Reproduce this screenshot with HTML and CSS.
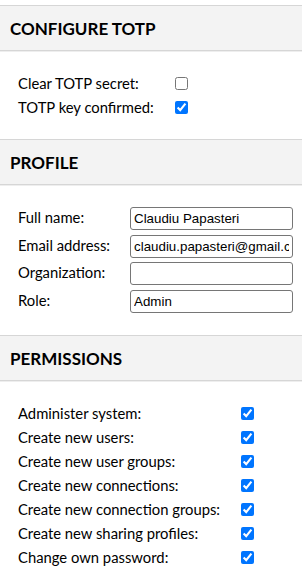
FILE: index.html
```html
<!DOCTYPE html>
<html lang="en">
<head>
    <meta charset="UTF-8">
    <meta name="viewport" content="width=device-width, initial-scale=1.0">
    <title>Edit User</title>
    <link rel="stylesheet" href="styles.css">
</head>
<body>
    <div class="section">
        <div class="section-header">
            <h2>Configure TOTP</h2>
        </div>
        <div class="section-content">
            <table class="fields checks">
                <tr>
                    <th>Clear TOTP secret:</th>
                    <td><input type="checkbox"></td>
                </tr>
                <tr>
                    <th>TOTP key confirmed:</th>
                    <td><input type="checkbox" checked></td>
                </tr>
            </table>
        </div>
    </div>

    <div class="section">
        <div class="section-header">
            <h2>Profile</h2>
        </div>
        <div class="section-content profile-content">
            <table class="fields profile">
                <tr>
                    <th>Full name:</th>
                    <td><input type="text" value="Claudiu Papasteri"></td>
                </tr>
                <tr>
                    <th>Email address:</th>
                    <td><input type="text" value="claudiu.papasteri@gmail.com"></td>
                </tr>
                <tr>
                    <th>Organization:</th>
                    <td><input type="text" value=""></td>
                </tr>
                <tr>
                    <th>Role:</th>
                    <td><input type="text" value="Admin"></td>
                </tr>
            </table>
        </div>
    </div>

    <div class="section">
        <div class="section-header">
            <h2>Permissions</h2>
        </div>
        <div class="section-content">
            <table class="fields checks">
                <tr>
                    <th>Administer system:</th>
                    <td><input type="checkbox" checked></td>
                </tr>
                <tr>
                    <th>Create new users:</th>
                    <td><input type="checkbox" checked></td>
                </tr>
                <tr>
                    <th>Create new user groups:</th>
                    <td><input type="checkbox" checked></td>
                </tr>
                <tr>
                    <th>Create new connections:</th>
                    <td><input type="checkbox" checked></td>
                </tr>
                <tr>
                    <th>Create new connection groups:</th>
                    <td><input type="checkbox" checked></td>
                </tr>
                <tr>
                    <th>Create new sharing profiles:</th>
                    <td><input type="checkbox" checked></td>
                </tr>
                <tr>
                    <th>Change own password:</th>
                    <td><input type="checkbox" checked></td>
                </tr>
            </table>
        </div>
    </div>
</body>
</html>
```

FILE: styles.css
```css
* {
    box-sizing: border-box;
}

body {
    margin: 0;
    padding-top: 5px;
    font-family: Lato, "Noto Sans", sans-serif;
    font-size: 14.8px;
    color: #000;
    background-color: #fff;
}

.section-header {
    height: 46px;
    display: flex;
    align-items: center;
    background-color: #f3f3f3;
    border-top: 1px solid #d6d6d6;
    border-bottom: 1px solid #d6d6d6;
    box-shadow: 0 1px 0 #eeeeee;
}

.section-header h2 {
    margin: 0;
    padding: 0 10px;
    font-size: 17px;
    font-weight: 700;
    text-transform: uppercase;
    line-height: 1;
}

.section-content {
    padding: 20px 16px;
}

.profile-content {
    padding: 22px 16px;
}

.fields {
    border-collapse: collapse;
}

.fields th {
    text-align: left;
    font-weight: 400;
    padding: 0 20px 0 2px;
    white-space: nowrap;
}

.fields td {
    padding: 0;
}

.checks th {
    padding-right: 17px;
}

.checks tr {
    height: 24px;
}

.checks input {
    display: block;
    width: 13px;
    height: 13px;
    margin: 0 0 0 4px;
}

.profile th {
    vertical-align: top;
    padding-top: 1px;
}

.profile input {
    display: block;
    width: 163px;
    height: 23px;
    margin: 0 0 4.7px 0;
    padding: 1px 3px;
    font-family: "Liberation Sans", Arial, sans-serif;
    font-size: 13.33px;
    color: #000;
    border: 1px solid #767676;
    border-radius: 3px;
}

.profile tr:last-child input {
    margin-bottom: 0;
}
```
